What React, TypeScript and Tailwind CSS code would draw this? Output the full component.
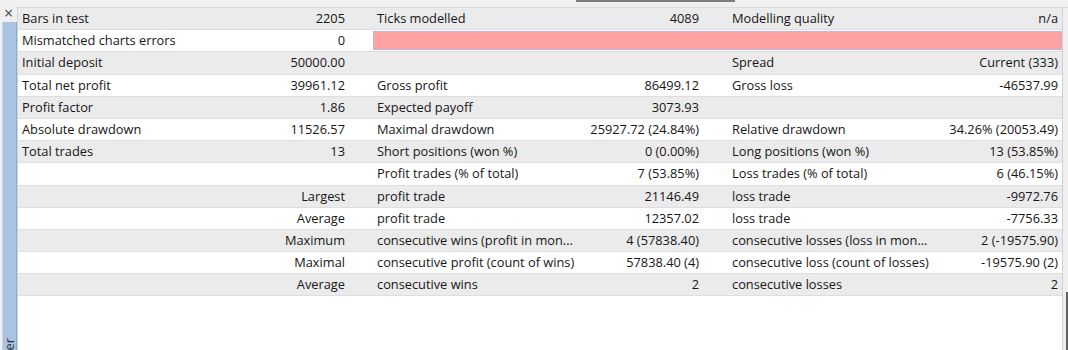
import React from "react";

type Row = {
  a?: string;
  av?: string;
  b?: string;
  bv?: string;
  c?: string;
  cv?: string;
  pink?: boolean;
};

const rows: Row[] = [
  { a: "Bars in test", av: "2205", b: "Ticks modelled", bv: "4089", c: "Modelling quality", cv: "n/a" },
  { a: "Mismatched charts errors", av: "0", pink: true },
  { a: "Initial deposit", av: "50000.00", c: "Spread", cv: "Current (333)" },
  { a: "Total net profit", av: "39961.12", b: "Gross profit", bv: "86499.12", c: "Gross loss", cv: "-46537.99" },
  { a: "Profit factor", av: "1.86", b: "Expected payoff", bv: "3073.93" },
  { a: "Absolute drawdown", av: "11526.57", b: "Maximal drawdown", bv: "25927.72 (24.84%)", c: "Relative drawdown", cv: "34.26% (20053.49)" },
  { a: "Total trades", av: "13", b: "Short positions (won %)", bv: "0 (0.00%)", c: "Long positions (won %)", cv: "13 (53.85%)" },
  { b: "Profit trades (% of total)", bv: "7 (53.85%)", c: "Loss trades (% of total)", cv: "6 (46.15%)" },
  { av: "Largest", b: "profit trade", bv: "21146.49", c: "loss trade", cv: "-9972.76" },
  { av: "Average", b: "profit trade", bv: "12357.02", c: "loss trade", cv: "-7756.33" },
  { av: "Maximum", b: "consecutive wins (profit in mon...", bv: "4 (57838.40)", c: "consecutive losses (loss in mon...", cv: "2 (-19575.90)" },
  { av: "Maximal", b: "consecutive profit (count of wins)", bv: "57838.40 (4)", c: "consecutive loss (count of losses)", cv: "-19575.90 (2)" },
  { av: "Average", b: "consecutive wins", bv: "2", c: "consecutive losses", cv: "2" },
];

export default function App() {
  return (
    <div
      className="w-[1068px] h-[350px] overflow-hidden bg-white flex text-[12.8px] text-[#161616]"
      style={{ fontFamily: '"Open Sans", "Noto Sans", Arial, sans-serif' }}
    >
      {/* left dock strip */}
      <div className="w-[17px] shrink-0 flex flex-col bg-[#f0f0f0]">
        <div className="h-[22px] shrink-0 flex items-start justify-center pt-[5px] text-[#444] text-[16px] leading-[16px]">
          ×
        </div>
        <div className="flex-1 ml-[2px] w-[15px] bg-[#a9c4e4] border-l border-[#c4d7ee] border-r border-r-[#8eaad0] flex flex-col overflow-hidden">
          <div className="h-[316px] shrink-0" />
          <span className="shrink-0 [writing-mode:vertical-rl] rotate-180 text-[12.8px] leading-[13px] text-[#333] whitespace-nowrap">
            Strategy Tester
          </span>
        </div>
      </div>

      {/* main */}
      <div className="flex-1 flex flex-col">
        <div className="h-[8px] shrink-0 bg-[#f0f0f0] border-b border-[#d9d9d9]">
          <div className="ml-[559px] w-[159px] h-[2px] bg-[#7d7d7d]" />
        </div>
        <div className="flex-1 flex">
          <div className="flex-1 flex flex-col border-l border-[#d4d4d4]">
            {rows.map((r, i) => (
              <div
                key={i}
                className={`h-[22.2px] shrink-0 flex items-stretch border-b border-[#dedede] ${
                  i % 2 === 0 ? "bg-[#ebebeb]" : "bg-white"
                }`}
              >
                <div className="w-[355px] shrink-0 pl-[4px] pr-[28px] flex items-center justify-between whitespace-nowrap">
                  <span>{r.a ?? ""}</span>
                  <span>{r.av ?? ""}</span>
                </div>
                {r.pink ? (
                  <div className="flex-1 my-[1px] bg-[#ffa2a2] border border-[#c3b4e6]" />
                ) : (
                  <>
                    <div className="w-[355px] shrink-0 pl-[4px] pr-[29px] flex items-center justify-between whitespace-nowrap">
                      <span>{r.b ?? ""}</span>
                      <span>{r.bv ?? ""}</span>
                    </div>
                    <div className="flex-1 pl-[4px] pr-[4px] flex items-center justify-between whitespace-nowrap">
                      <span>{r.c ?? ""}</span>
                      <span>{r.cv ?? ""}</span>
                    </div>
                  </>
                )}
              </div>
            ))}
          </div>
          <div className="w-[6px] shrink-0 bg-[#f0f0f0] border-l border-[#d0d0d0] flex flex-col justify-end">
            <div className="h-[58px] w-[2px] ml-auto bg-[#606060]" />
          </div>
        </div>
      </div>
    </div>
  );
}
